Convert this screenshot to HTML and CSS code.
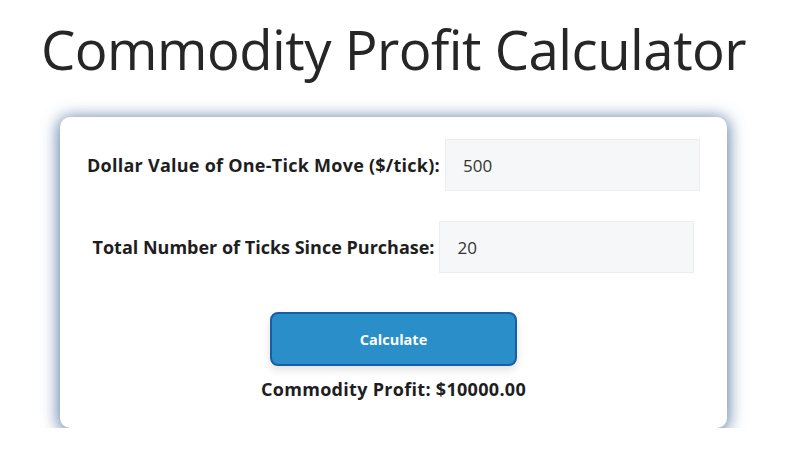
FILE: index.html
```html
<!DOCTYPE html>
<html lang="en">
<head>
    <meta charset="UTF-8">
    <meta name="viewport" content="width=device-width, initial-scale=1.0">
    <title>Commodity Profit Calculator</title>
    <link rel="stylesheet" href="styles.css">
</head>
<body>

<div class="page">
    <h1>Commodity Profit Calculator</h1>

    <div class="calc-card">
        <div class="form-row">
            <label for="tickValue">Dollar Value of One-Tick Move ($/tick):</label>
            <input type="text" id="tickValue" value="500">
        </div>
        <div class="form-row tight">
            <label for="tickCount">Total Number of Ticks Since Purchase:</label>
            <input type="text" id="tickCount" value="20">
        </div>
        <button class="calc-button" id="calcButton">Calculate</button>
        <p class="result" id="result">Commodity Profit: $10000.00</p>
    </div>
</div>

</body>
</html>
```

FILE: styles.css
```css
body {
    margin: 0;
    font-family: "Open Sans", "Noto Sans", sans-serif;
    color: #222;
    background: #fff;
}

.page {
    width: 787px;
}

h1 {
    text-align: center;
    font-weight: 400;
    font-size: 54.5px;
    margin: 14px 0 0;
    line-height: 70px;
    letter-spacing: -0.5px;
    color: #262626;
}

.calc-card {
    width: 667px;
    margin: 33px auto 0;
    box-sizing: border-box;
    padding: 22px 0 27px;
    background: #fff;
    border-radius: 10px;
    box-shadow: 0 2px 16px 2px rgba(50, 90, 140, 0.75);
    display: flex;
    flex-direction: column;
    align-items: center;
}

.form-row {
    display: flex;
    align-items: center;
    justify-content: center;
    margin-bottom: 30px;
}

.form-row label {
    font-weight: 700;
    font-size: 18px;
    letter-spacing: 0.25px;
    margin-right: 5px;
    color: #1e1e1e;
}

.form-row.tight label {
    letter-spacing: 0;
}

.form-row input {
    width: 255px;
    height: 52px;
    box-sizing: border-box;
    border: 1px solid #ededed;
    background: #f6f7f8;
    padding: 0 17px;
    font-family: inherit;
    font-size: 17px;
    color: #333;
    outline: none;
}

.calc-button {
    width: 247px;
    height: 54px;
    margin-top: 9px;
    background-color: #2a8fc9;
    color: white;
    border: 2px solid #175ea6;
    border-radius: 8px;
    box-shadow: 0 4px 8px rgba(0, 0, 0, 0.12);
    font-family: inherit;
    font-weight: 700;
    font-size: 14.5px;
    cursor: pointer;
}

.result {
    margin: 11px 0 0;
    font-weight: 700;
    font-size: 18px;
    letter-spacing: 0.3px;
    color: #1e1e1e;
}
```
